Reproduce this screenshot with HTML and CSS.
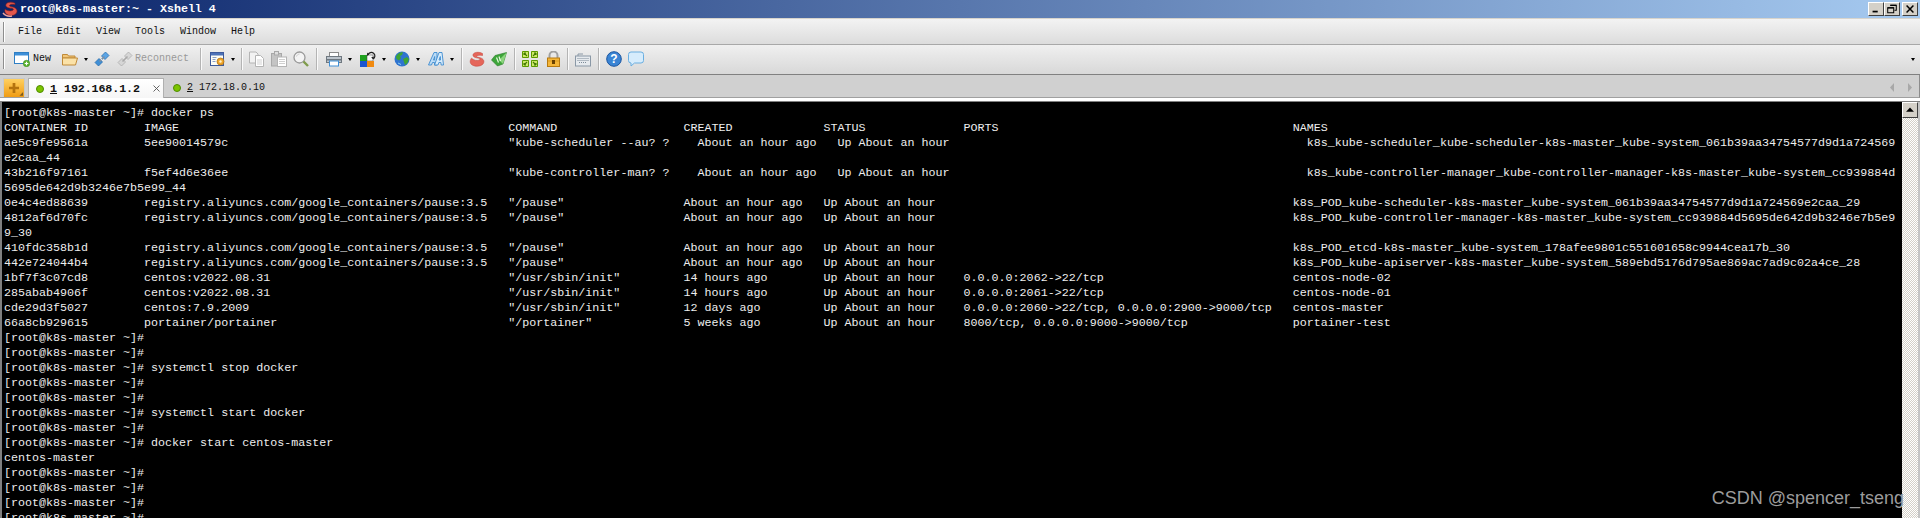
FILE: index.html
```html
<!DOCTYPE html>
<html lang="en">
<head>
<meta charset="utf-8">
<title>root@k8s-master:~ - Xshell 4</title>
<link rel="stylesheet" href="styles.css">
</head>
<body>
<div class="window">
  <header class="titlebar">
    <svg class="logo" viewBox="0 0 16 16"><path d="M13 2.2C9.5.4 5 1 4 3.4 3 6 6.5 7 9.5 7.2 11.5 7.4 12 8.6 10.6 9.4 8.6 10.4 5 9.8 3 8.2 2.4 11 3.4 13 6 14c3.6 1.2 8.4.2 9-3.2.4-3-2.4-4.6-5.4-5C8 5.500 7 5 7.600 4.200 8.400 3.200 11 3 13 3.600z" fill="#e2574c" stroke="#8c1f1a" stroke-width=".6"/><path d="M1 12c2 2.600 5.500 3.600 9 3" fill="none" stroke="#f3a59d" stroke-width="1.400"/></svg>
    <span class="title-text">root@k8s-master:~ - Xshell 4</span>
    <div class="win-buttons">
      <button class="win-btn"><svg viewBox="0 0 16 14"><rect x="4" y="9" width="6" height="2" fill="#000"/></svg></button>
      <button class="win-btn"><svg viewBox="0 0 16 14"><path d="M6 2.500h7v6h-2M3 5.500h7v6H3z" fill="none" stroke="#000" stroke-width="1.200"/><path d="M6 2h7v1.400H6zM3 5h7v1.400H3z" fill="#000"/></svg></button>
      <button class="win-btn win-close"><svg viewBox="0 0 16 14"><path d="M4 3l8 8M12 3l-8 8" stroke="#000" stroke-width="1.800"/></svg></button>
    </div>
  </header>

  <nav class="menubar">
    <span class="grip"></span>
    <span class="menu-item">File</span>
    <span class="menu-item">Edit</span>
    <span class="menu-item">View</span>
    <span class="menu-item">Tools</span>
    <span class="menu-item">Window</span>
    <span class="menu-item">Help</span>
  </nav>

  <div class="toolbar">
    <span class="grip"></span>
    <span class="tool-label ml3">
      <svg class="icon" viewBox="0 0 16 16"><rect x=".5" y="1.500" width="14" height="11" fill="#fff" stroke="#2f7fc4"/><rect x="1" y="2" width="13" height="2.500" fill="#3d8fd8"/><circle cx="12.500" cy="12.500" r="3.200" fill="#5cb531" stroke="#3c8a1c" stroke-width=".6"/><path d="M12.500 10.700v3.600M10.700 12.500h3.600" stroke="#fff" stroke-width="1.100"/></svg>
      <span class="tool-text">New</span>
    </span>
    <span class="split ml5">
      <svg class="icon" viewBox="0 0 16 16"><path d="M.5 3.500h5l1 1.500h6.500v2H.5z" fill="#f2c77a" stroke="#c08a38"/><path d="M.5 14V7h15l-2 7z" fill="#fbe2a8" stroke="#c08a38"/></svg>
      <span class="caret"></span>
    </span>
    <svg class="icon" viewBox="0 0 16 16"><path d="M1 11.500l4-4 3.500 3.500-4 4z" fill="#3f8fd6" stroke="#2367a8" stroke-width=".7"/><path d="M7.500 5l4-4L15 4.500l-4 4z" fill="#5ba5e6" stroke="#2367a8" stroke-width=".7"/><path d="M5.500 10.500l5-5" stroke="#7a8ea3" stroke-width="1.600"/><path d="M7 8l1.500 1.500" stroke="#fff" stroke-width=".8"/></svg>
    <span class="tool-label tool-tight ml1 off">
      <svg class="icon" viewBox="0 0 16 16"><path d="M1 11.500l4-4 3.500 3.500-4 4zM7.500 5l4-4L15 4.500l-4 4z" fill="#d6d6d6" stroke="#a8a8a8" stroke-width=".7"/><path d="M5.500 10.500l5-5" stroke="#a8a8a8" stroke-width="1.600"/></svg>
      <span class="tool-text">Reconnect</span>
    </span>
    <span class="sep ml5"></span>
    <span class="split ml2">
      <svg class="icon" viewBox="0 0 16 16"><rect x=".5" y="1.500" width="13" height="13" fill="#fdfdf5" stroke="#3d5a9c"/><rect x="1" y="2" width="12" height="2.500" fill="#4d72b8"/><path d="M2.500 6.500h4M2.500 8.500h3M2.500 10.500h3" stroke="#8aa0c8"/><circle cx="10.500" cy="10.500" r="3.500" fill="#f0a62a" stroke="#a86a10" stroke-width=".7"/><circle cx="10.500" cy="10.500" r="1.200" fill="#fff2c8"/></svg>
      <span class="caret caret-near"></span>
    </span>
    <span class="sep"></span>
    <svg class="icon" viewBox="0 0 16 16"><path d="M.5 1h6.500l2 2v9H.5z" fill="#f2f2f2" stroke="#b4b4b4"/><path d="M6.500 4.500h5l3 3v8h-8z" fill="#fff" stroke="#b4b4b4"/><path d="M8 9h5M8 11h5M8 13h5" stroke="#d2d2d2"/></svg>
    <svg class="icon" viewBox="0 0 16 16"><rect x=".5" y="2.500" width="10" height="12.500" fill="#c4c4c4" stroke="#a8a8a8"/><rect x="3.500" y=".5" width="4" height="3.500" fill="#dedede" stroke="#a8a8a8"/><rect x="6.500" y="6" width="9" height="9.500" fill="#fff" stroke="#b4b4b4"/><path d="M8 8.500h6M8 10.500h6M8 12.500h6" stroke="#cfcfcf"/></svg>
    <svg class="icon" viewBox="0 0 16 16"><circle cx="6.500" cy="6.500" r="5.500" fill="#f4f4f4" stroke="#9a9a9a" stroke-width="1.300"/><path d="M3.500 5.500c.5-1.500 1.500-2.300 3-2.500" fill="none" stroke="#c8c8c8"/><path d="M10.500 10.500l4.500 4.500" stroke="#7f9c4c" stroke-width="2.400"/></svg>
    <span class="sep ml1"></span>
    <span class="split ml2">
      <svg class="icon" viewBox="0 0 16 16"><rect x="3.500" y="1.500" width="9" height="4" fill="#fff" stroke="#8a8a8a"/><rect x=".5" y="5.500" width="15" height="6" fill="#bcc4cc" stroke="#6f7880"/><rect x="1" y="8" width="14" height="1.500" fill="#6f7880"/><rect x="3.500" y="10" width="9" height="5" fill="#fff" stroke="#3f8fd6"/></svg>
      <span class="caret"></span>
    </span>
    <span class="split ml2">
      <svg class="icon" viewBox="0 0 16 16"><rect x="0" y="4" width="7" height="6" fill="#1ea01e"/><rect x="7" y="4" width="6" height="6" fill="#f7f7f7" stroke="#444" stroke-width=".5"/><rect x="0" y="10" width="7" height="6" fill="#1c55d0"/><rect x="7" y="10" width="7" height="6" fill="#f08a10"/><path d="M8 4a3.500 3.500 0 1 1 5 4" fill="none" stroke="#222" stroke-width="1.200"/><path d="M7 1.500l2 2-2 1.500zM14.500 5.500l-1.800 2.500-1.500-1.800z" fill="#222"/></svg>
      <span class="caret"></span>
    </span>
    <span class="split ml2">
      <svg class="icon" viewBox="0 0 16 16"><circle cx="8" cy="8" r="7.500" fill="#2f74d0"/><path d="M3 4c2-2 4-3 6-2.500L8 4 6 5l1 2-2 2.500L2.500 8 2 5.500zM9 8l4-2 2 2-1.500 4-2.500 2-1-3z" fill="#3fa535"/><path d="M4 12l3 1.500" stroke="#8fd0f0"/></svg>
      <span class="caret"></span>
    </span>
    <span class="split ml2">
      <svg class="icon" viewBox="0 0 16 16"><path d="M.5 14L6 1.500h3L9 14H6.500V11.500H4.500L3.500 14zM5.500 9h1.200V5.500z" fill="#bcdcf6" stroke="#3d8bd0" stroke-width=".9"/><path d="M6.500 14L11 1.500h3L15.500 14h-2.300l-.3-2.500h-2L10 14zM11 9h1.500l-.2-3.500z" fill="#d8ecfb" stroke="#3d8bd0" stroke-width=".9"/></svg>
      <span class="caret"></span>
    </span>
    <span class="sep ml1"></span>
    <svg class="icon" viewBox="0 0 16 16"><path d="M13.500 2.500C10 .5 4.500 1 4 3.800 3.700 6.500 7.500 6.800 10 7.200c1.500.3 1.200 1.500 0 2-2.200.8-5 .2-7.500-2C1 9 .5 11.500 2.500 13.500c3 2.500 9 2.300 11.500-.5 2-2.500.5-5.500-3-6.300-1.500-.4-3-.5-3.300-1.200-.3-1.200 3.300-1.500 5.800-1z" fill="#e5665a" stroke="#c0392f" stroke-width=".5"/></svg>
    <svg class="icon" viewBox="0 0 16 16"><path d="M15.500 1.500L4 4.500.5 9l6 6 5.500-2z" fill="#3da53a" stroke="#2a7a28" stroke-width=".6"/><path d="M15.500 1.500L12 13 8 9z" fill="#8cd47e"/><path d="M5.500 6.500l2 5M8 5.500l1.500 4.500" stroke="#e8f8e0" stroke-width="1.200"/></svg>
    <span class="sep ml1"></span>
    <svg class="icon" viewBox="0 0 16 16"><path d="M.5.500h6v6h-6zM9.500.500h6v6h-6zM.5 9.500h6v6h-6zM9.500 9.500h6v6h-6z" fill="#cde86a" stroke="#5c9a00"/><path d="M2 2l3 3M2 2h2M2 2v2M14 2l-3 3M14 2h-2M14 2v2M2 14l3-3M2 14h2M2 14v-2M14 14l-3-3M14 14h-2M14 14v-2" stroke="#3f7a00" stroke-width="1.100"/></svg>
    <svg class="icon icon-lock ml2" viewBox="0 0 15 16"><path d="M3.500 7V4.500a4 4 0 0 1 8 0V7" fill="none" stroke="#a0a0a0" stroke-width="2"/><rect x="1.500" y="7" width="12" height="8.500" fill="#f5b638" stroke="#b87a10"/><rect x="2" y="9.500" width="11" height="1" fill="#d99a20"/><rect x="6" y="9" width="3" height="4" fill="#6b4200"/></svg>
    <span class="sep"></span>
    <svg class="icon" viewBox="0 0 16 16"><rect x=".5" y="5" width="15" height="10" fill="#e6eaee" stroke="#8a98a6"/><path d="M3 3v2M3 3h5" stroke="#8a98a6"/><path d="M2.500 7.500h11M2.500 9.500h11M4 11.500h8" stroke="#7d8b98" stroke-dasharray="1 1"/></svg>
    <span class="sep ml1"></span>
    <svg class="icon" viewBox="0 0 16 16"><circle cx="8" cy="8" r="7.300" fill="#3a84d4" stroke="#1a55a0"/><text class="help-mark" x="8" y="12">?</text></svg>
    <svg class="icon" viewBox="0 0 16 16"><path d="M3 1h10a2.500 2.500 0 0 1 2.500 2.500v6A2.500 2.500 0 0 1 13 12H6.500L3 15v-3a2.500 2.500 0 0 1-2.500-2.500v-6A2.500 2.500 0 0 1 3 1z" fill="#d6ecfc" stroke="#6aaee0"/></svg>
    <span class="caret toolbar-end"></span>
  </div>

  <div class="tabbar">
    <span class="new-tab"><svg viewBox="0 0 22 19"><path d="M9.500 4h3v4h4v3h-4v4h-3v-4h-4V8h4z" fill="#b4730e"/><path d="M21 14v4h-4z" fill="#7a5a20"/></svg></span>
    <span class="tab tab-active">
      <span class="dot"></span>
      <span class="tab-num">1</span>
      <span class="tab-name">192.168.1.2</span>
      <svg class="tab-close" viewBox="0 0 7 7"><path d="M.5.500l6 6M6.500.500l-6 6" stroke="#555" stroke-width=".9"/></svg>
    </span>
    <span class="tab">
      <span class="dot"></span>
      <span class="tab-num">2</span>
      <span class="tab-name">172.18.0.10</span>
    </span>
    <span class="tab-nav">
      <svg viewBox="0 0 5 9" class="nav-arrow"><path d="M4 0v9L0 4.500z"/></svg>
      <svg viewBox="0 0 5 9" class="nav-arrow"><path d="M0 0v9l4-4.500z"/></svg>
    </span>
  </div>
  <div class="tab-gap"></div>

  <main class="terminal-wrap">
<pre class="terminal">[root@k8s-master ~]# docker ps
CONTAINER ID        IMAGE                                               COMMAND                  CREATED             STATUS              PORTS                                          NAMES
ae5c9fe9561a        5ee90014579c                                        "kube-scheduler --au? ?    About an hour ago   Up About an hour                                                   k8s_kube-scheduler_kube-scheduler-k8s-master_kube-system_061b39aa34754577d9d1a724569
e2caa_44
43b216f97161        f5ef4d6e36ee                                        "kube-controller-man? ?    About an hour ago   Up About an hour                                                   k8s_kube-controller-manager_kube-controller-manager-k8s-master_kube-system_cc939884d
5695de642d9b3246e7b5e99_44
0e4c4ed88639        registry.aliyuncs.com/google_containers/pause:3.5   "/pause"                 About an hour ago   Up About an hour                                                   k8s_POD_kube-scheduler-k8s-master_kube-system_061b39aa34754577d9d1a724569e2caa_29
4812af6d70fc        registry.aliyuncs.com/google_containers/pause:3.5   "/pause"                 About an hour ago   Up About an hour                                                   k8s_POD_kube-controller-manager-k8s-master_kube-system_cc939884d5695de642d9b3246e7b5e9
9_30
410fdc358b1d        registry.aliyuncs.com/google_containers/pause:3.5   "/pause"                 About an hour ago   Up About an hour                                                   k8s_POD_etcd-k8s-master_kube-system_178afee9801c551601658c9944cea17b_30
442e724044b4        registry.aliyuncs.com/google_containers/pause:3.5   "/pause"                 About an hour ago   Up About an hour                                                   k8s_POD_kube-apiserver-k8s-master_kube-system_589ebd5176d795ae869ac7ad9c02a4ce_28
1bf7f3c07cd8        centos:v2022.08.31                                  "/usr/sbin/init"         14 hours ago        Up About an hour    0.0.0.0:2062-&gt;22/tcp                           centos-node-02
285abab4906f        centos:v2022.08.31                                  "/usr/sbin/init"         14 hours ago        Up About an hour    0.0.0.0:2061-&gt;22/tcp                           centos-node-01
cde29d3f5027        centos:7.9.2009                                     "/usr/sbin/init"         12 days ago         Up About an hour    0.0.0.0:2060-&gt;22/tcp, 0.0.0.0:2900-&gt;9000/tcp   centos-master
66a8cb929615        portainer/portainer                                 "/portainer"             5 weeks ago         Up About an hour    8000/tcp, 0.0.0.0:9000-&gt;9000/tcp               portainer-test
[root@k8s-master ~]#
[root@k8s-master ~]#
[root@k8s-master ~]# systemctl stop docker
[root@k8s-master ~]#
[root@k8s-master ~]#
[root@k8s-master ~]# systemctl start docker
[root@k8s-master ~]#
[root@k8s-master ~]# docker start centos-master
centos-master
[root@k8s-master ~]#
[root@k8s-master ~]#
[root@k8s-master ~]#
[root@k8s-master ~]#</pre>
    <div class="scrollbar">
      <span class="scroll-up"><svg viewBox="0 0 16 16"><path d="M8 5l4.500 5h-9z" fill="#000"/></svg></span>
    </div>
    <span class="watermark">CSDN @spencer_tseng</span>
  </main>
</div>
</body>
</html>
```
FILE: styles.css
```css
* { box-sizing: border-box; }
html, body { margin: 0; height: 100%; overflow: hidden; }
body { background: #000; }
.window { display: flex; flex-direction: column; height: 518px; width: 1920px; font-family: "Liberation Mono", monospace; }

.titlebar { height: 18px; display: flex; align-items: center; padding-left: 2px; background: linear-gradient(90deg, #0a246a, #a6caf0); }
.logo { width: 16px; height: 16px; flex: none; }
.title-text { margin-left: 2px; color: #fff; font-size: 11.67px; font-weight: 700; white-space: pre; }
.win-buttons { margin-left: auto; display: flex; padding-right: 2px; }
.win-btn { width: 16px; height: 14px; padding: 0; background: #d4d0c8; border: 1px solid; border-color: #fff #404040 #404040 #fff; display: block; }
.win-btn svg { display: block; width: 14px; height: 12px; }
.win-close { margin-left: 2px; }

.menubar { height: 27px; display: flex; align-items: center; gap: 15px; padding-left: 3px; background: linear-gradient(#f3f3f3, #dcdcdc); border-top: 1px solid #d8d4cc; border-bottom: 1px solid #a8a8a8; }
.grip { width: 2px; height: 20px; flex: none; background: #fff; border-left: 1px solid #8e8e8e; }
.menubar .grip { margin-right: -2px; }
.menu-item { font-size: 10px; color: #111; line-height: 12px; }

.toolbar { height: 30px; display: flex; align-items: center; gap: 6px; padding-left: 3px; padding-bottom: 1px; background: linear-gradient(#f0f0f0, #d8d8d8); border-bottom: 1px solid #808080; }
.icon { width: 16px; height: 16px; flex: none; display: block; }
.icon-lock { width: 15px; }
.tool-label { display: flex; align-items: center; gap: 3px; }
.tool-tight { gap: 2px; }
.tool-text { font-size: 10px; line-height: 12px; color: #111; }
.off .tool-text { color: #999; }
.split { display: flex; align-items: center; gap: 6px; }
.caret { width: 0; height: 0; flex: none; border: solid transparent; border-width: 3px 2.500px 0; border-top-color: #000; }
.caret-near { margin-left: -1px; }
.sep { width: 2px; height: 22px; flex: none; border-left: 1px solid #b4b4b4; border-right: 1px solid #fafafa; }
.toolbar-end { margin-left: auto; margin-right: 5px; }
.help-mark { font-family: "Liberation Sans", sans-serif; font-size: 12px; font-weight: 700; fill: #fff; text-anchor: middle; }
.ml1 { margin-left: 1px; }
.ml2 { margin-left: 2px; }
.ml3 { margin-left: 3px; }
.ml5 { margin-left: 5px; }

.tabbar { height: 23px; display: flex; align-items: flex-end; padding-left: 3px; background: #d0d0d0; border-bottom: 1px solid #a0a0a0; border-right: 1px solid #8c8c8c; }
.new-tab { width: 22px; height: 19px; flex: none; background: linear-gradient(#ffd060, #f09c14); border: 1px solid #c8c8c8; border-bottom: 0; }
.new-tab svg { display: block; width: 20px; height: 18px; }
.tab { display: flex; align-items: center; height: 19px; flex: none; font-size: 10px; color: #111; }
.tab-active { width: 136px; margin-left: 3px; margin-bottom: -1px; height: 20px; padding-left: 7px; background: linear-gradient(#fff, #f6f6f6); border: 1px solid #b0b0b0; border-bottom: 0; }
.tab-active + .tab { margin-left: 9px; }
.dot { width: 8px; height: 8px; border-radius: 50%; background: #7cc400; border: 1px solid #4f8c00; flex: none; }
.tab-num { margin-left: 6px; width: 6px; text-decoration: underline; font-size: 10px; }
.tab-name { margin-left: 6px; }
.tab-active .tab-num { width: 7px; font-size: 11.67px; font-weight: 700; }
.tab-active .tab-name { margin-left: 7px; letter-spacing: -.1px; font-size: 11.67px; font-weight: 700; }
.tab-close { width: 7px; height: 7px; margin-left: 13px; flex: none; }
.tab-nav { margin-left: auto; display: flex; gap: 13px; padding: 0 6px 5px 0; }
.nav-arrow { width: 5px; height: 9px; fill: #a8a8a8; display: block; }
.tab-gap { height: 4px; background: #fff; border-bottom: 1px solid #808080; }

.terminal-wrap { position: relative; flex: 1; min-height: 0; display: flex; background: #000; border-left: 2px solid #808080; border-right: 2px solid #c4c4c4; }
.terminal { flex: 1; min-width: 0; margin: 0; padding: 4px 0 0 2px; overflow: hidden; font-family: "Liberation Mono", monospace; font-size: 11.68px; line-height: 15px; color: #eee; white-space: pre; }
.scrollbar { width: 16px; flex: none; background-color: #fff; background-image: conic-gradient(#d4d0c8 25%, #fff 0 50%, #d4d0c8 0 75%, #fff 0); background-size: 2px 2px; }
.scroll-up { display: block; width: 16px; height: 16px; background: #d4d0c8; border: 1px solid; border-color: #fff #404040 #404040 #fff; }
.scroll-up svg { display: block; width: 14px; height: 14px; }
.watermark { position: absolute; right: 14px; bottom: 10px; font-family: "Liberation Sans", sans-serif; font-size: 18px; line-height: 20px; color: #9c9c9c; }
```
